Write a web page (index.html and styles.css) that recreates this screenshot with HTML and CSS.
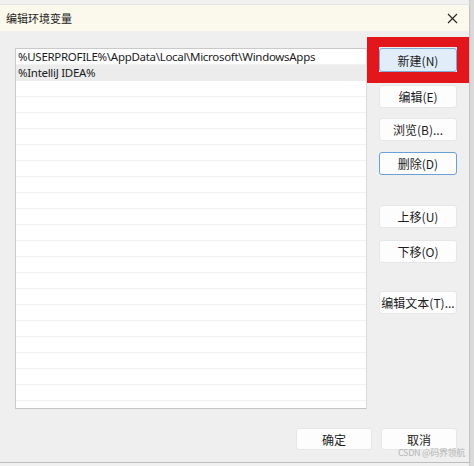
FILE: index.html
```html
<!DOCTYPE html>
<html lang="zh-CN">
<head>
<meta charset="utf-8">
<title>编辑环境变量</title>
<link rel="stylesheet" href="styles.css">
</head>
<body>
<div class="screen">
  <div class="window">
    <div class="titlebar">
      <span class="title">编辑环境变量</span>
      <svg class="close" width="11" height="11" viewBox="0 0 11 11"><path d="M1 1L10 10M10 1L1 10" stroke="#222" stroke-width="1.1" fill="none"/></svg>
    </div>
    <div class="content">
      <div class="main">
        <div class="list">
          <div class="row">%USERPROFILE%\AppData\Local\Microsoft\WindowsApps</div>
          <div class="row sel">%IntelliJ IDEA%</div>
        </div>
        <div class="side">
          <div class="btn primary b-new">新建(N)</div>
          <div class="btn b-edit">编辑(E)</div>
          <div class="btn b-browse">浏览(B)...</div>
          <div class="btn focus b-del">删除(D)</div>
          <div class="btn b-up">上移(U)</div>
          <div class="btn b-down">下移(O)</div>
          <div class="btn b-text">编辑文本(T)...</div>
        </div>
      </div>
      <div class="footer">
        <div class="btn fbtn">确定</div>
        <div class="btn fbtn">取消</div>
      </div>
    </div>
    <div class="highlight"></div>
    <div class="watermark">CSDN @码界领航</div>
  </div>
</div>
</body>
</html>
```
FILE: styles.css
```css
* { box-sizing: border-box; }
html, body { margin: 0; padding: 0; }
body {
  font-family: "Noto Sans", "Noto Sans CJK SC", sans-serif;
  color: #1b1b1b;
  background: #e6e6e6;
}
.screen {
  width: 474px;
  height: 466px;
  padding: 4px 0 0 0;
  background: linear-gradient(to right, #f1f1f1 0, #f1f1f1 469px, #c9c9c9 469px, #dadada 471px);
  overflow: hidden;
}
.window {
  position: relative;
  width: 470px;
  height: 459px;
  background: #efefef;
  border-right: 1px solid #c4c4c4;
  border-bottom: 1px solid #bdbdbd;
  border-top: 1px solid #e4e4e4;
  display: flex;
  flex-direction: column;
}
.titlebar {
  height: 26px;
  background: #fbf8ec;
  display: flex;
  align-items: center;
  justify-content: space-between;
  padding: 0 11px 0 6px;
  flex: none;
}
.title {
  font-family: "Noto Sans CJK SC", sans-serif;
  font-size: 11px;
  color: #222;
}
.close { margin-top: 1px; }
.content {
  flex: 1;
  display: flex;
  flex-direction: column;
  padding: 17px 12px 0 15px;
}
.main {
  display: flex;
  gap: 12px;
}
.list {
  width: 352px;
  height: 361px;
  background-color: #fff;
  background-image: repeating-linear-gradient(to bottom, transparent 0, transparent 15px, #f2f2f2 15px, #f2f2f2 16px);
  border: 1px solid #c9c9c9;
  border-right-color: #dcdcdc;
  border-bottom-color: #c4c4c4;
  flex: none;
}
.row {
  height: 16px;
  line-height: 16px;
  font-size: 11.5px;
  padding-left: 2px;
  white-space: nowrap;
  color: #1b1b1b;
  letter-spacing: -0.3px;
}
.row.sel { background: #ececec; }
.side {
  display: flex;
  flex-direction: column;
  width: 78px;
}
.btn {
  height: 23px;
  display: flex;
  align-items: center;
  justify-content: center;
  background: #fdfdfd;
  border: 1px solid #e6e6e6;
  border-radius: 3px;
  font-family: "Noto Sans CJK SC", sans-serif;
  font-size: 12px;
  color: #1b1b1b;
}
.btn.primary {
  background: #e1eefa;
  border-color: #7fa9d6;
  height: 24px;
}
.btn.focus {
  border-color: #6c9fd6;
}
.b-new { margin-top: 0; }
.b-edit { margin-top: 13px; }
.b-browse { margin-top: 10px; }
.b-del { margin-top: 11px; }
.b-up { margin-top: 30px; }
.b-down { margin-top: 12px; }
.b-text { margin-top: 28px; }
.footer {
  display: flex;
  justify-content: flex-end;
  gap: 9px;
  margin-top: 19px;
}
.fbtn { width: 76px; height: 22px; }
.highlight {
  position: absolute;
  left: 367px;
  top: 32px;
  width: 102px;
  height: 46px;
  border-style: solid;
  border-color: #e3171b;
  border-width: 10px 12px 11px 12px;
  pointer-events: none;
}
.watermark {
  position: absolute;
  right: 4px;
  bottom: 3px;
  font-family: "Noto Sans CJK SC", sans-serif;
  font-size: 9px;
  color: #b4b4b4;
  letter-spacing: -0.3px;
}
```
